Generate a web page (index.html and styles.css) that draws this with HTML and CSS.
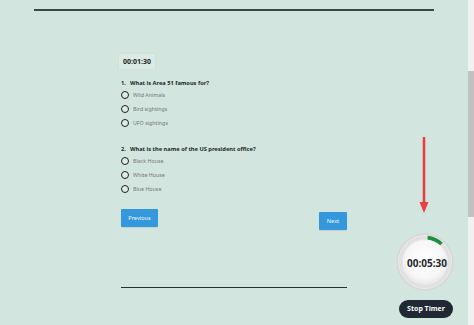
FILE: index.html
```html
<!DOCTYPE html>
<html>
<head>
<meta charset="utf-8">
<link rel="stylesheet" href="styles.css">
</head>
<body>
<div class="page">
  <div class="rule-top"></div>
  <div class="quiz">
    <div class="timer-box">00:01:30</div>

    <div class="question q1"><span class="num">1.</span>What is Area 51 famous for?</div>
    <label class="option"><span class="radio"></span>Wild Animals</label>
    <label class="option"><span class="radio"></span>Bird sightings</label>
    <label class="option"><span class="radio"></span>UFO sightings</label>

    <div class="question q2"><span class="num">2.</span>What is the name of the US president office?</div>
    <label class="option"><span class="radio"></span>Black House</label>
    <label class="option"><span class="radio"></span>White House</label>
    <label class="option"><span class="radio"></span>Blue House</label>

    <div class="nav">
      <button class="btn">Previous</button>
      <button class="btn next">Next</button>
    </div>
    <div class="rule-bottom"></div>
  </div>

  <svg class="arrow" width="10" height="78" viewBox="0 0 10 78">
    <line x1="5" y1="1" x2="5" y2="68" stroke="#e8403f" stroke-width="2.6" stroke-linecap="round"/>
    <polygon points="0.5,65 9.5,65 5,76" fill="#e8403f"/>
  </svg>

  <div class="widget">
    <div class="dial">
      <svg class="dial-bg" width="58" height="58" viewBox="0 0 58 58">
        <defs>
          <radialGradient id="g" cx="50%" cy="45%" r="55%">
            <stop offset="0%" stop-color="#ffffff"/>
            <stop offset="75%" stop-color="#f7f7f7"/>
            <stop offset="100%" stop-color="#e9e9e9"/>
          </radialGradient>
        </defs>
        <circle cx="29" cy="29" r="28.5" fill="#d6d6d6"/>
        <circle cx="29" cy="29" r="27" fill="#ececec"/>
        <circle cx="29" cy="29" r="24.5" fill="none" stroke="#e1e1e1" stroke-width="3.5"/>
        <path d="M31.6 4.6 A24.5 24.5 0 0 1 45.5 11" fill="none" stroke="#1f8f3f" stroke-width="3.6"/>
        <circle cx="29" cy="29" r="22.3" fill="url(#g)"/>
      </svg>
      <span class="dial-time">00:05:30</span>
    </div>
    <button class="stop">Stop Timer</button>
  </div>
</div>
<div class="scrollbar"><div class="thumb"></div></div>
</body>
</html>
```
FILE: styles.css
```css
html, body {
  margin: 0;
  padding: 0;
}
body {
  display: flex;
  width: 474px;
  height: 325px;
  overflow: hidden;
  font-family: "Noto Sans", "Open Sans", sans-serif;
  background: #d3e5df;
}
.page {
  position: relative;
  flex: 1;
  height: 325px;
  background: #d3e5df;
}
.rule-top {
  margin: 9px 34px 0;
  height: 2px;
  background: #344a43;
}
.quiz {
  margin-left: 121px;
  width: 226px;
  display: flex;
  flex-direction: column;
}
.timer-box {
  align-self: flex-start;
  margin-top: 43px;
  margin-left: -2px;
  width: 36px;
  height: 15px;
  display: flex;
  align-items: center;
  justify-content: center;
  background: #dbeae5;
  box-shadow: 0 0 2px rgba(0,0,0,0.06);
  font-size: 7px;
  font-weight: 700;
  color: #1d2725;
}
.question {
  height: 10px;
  line-height: 10px;
  font-size: 5.7px;
  font-weight: 700;
  color: #1c2826;
  white-space: nowrap;
}
.question .num {
  display: inline-block;
  width: 9px;
}
.q1 { margin-top: 8.5px; }
.q2 { margin-top: 14.5px; }
.option {
  height: 14px;
  display: flex;
  align-items: center;
  gap: 4px;
  font-size: 5.3px;
  color: #6f7775;
}
.radio {
  width: 8px;
  height: 8px;
  box-sizing: border-box;
  border: 1.3px solid #1c1f1f;
  border-radius: 50%;
  background: #dfece8;
}
.nav {
  display: flex;
  justify-content: space-between;
  align-items: flex-start;
  margin-top: 13px;
}
.btn {
  border: none;
  margin: 0;
  padding: 0;
  height: 17.5px;
  width: 37px;
  background: #3597dc;
  color: #f4f9fd;
  font-family: inherit;
  font-size: 5.6px;
  border-radius: 1px;
  box-shadow: 0 1px 1px rgba(0,0,0,0.08);
}
.btn.next {
  width: 28px;
  margin-top: 3px;
}
.rule-bottom {
  margin-top: 57px;
  height: 1.6px;
  background: #26332f;
}
.arrow {
  position: absolute;
  left: 419px;
  top: 137px;
}
.widget {
  position: absolute;
  left: 396px;
  top: 233px;
  width: 58px;
  display: flex;
  flex-direction: column;
  align-items: center;
  gap: 9px;
}
.dial {
  position: relative;
  width: 58px;
  height: 58px;
  display: flex;
  align-items: center;
  justify-content: center;
}
.dial-bg {
  position: absolute;
  left: 0;
  top: 0;
}
.dial-time {
  position: relative;
  left: 2px;
  top: 1px;
  font-size: 10px;
  font-weight: 700;
  color: #23282b;
}
.stop {
  border: none;
  margin: 0 0 0 2px;
  padding: 0;
  width: 54px;
  height: 17.5px;
  border-radius: 9px;
  background: #1f2833;
  color: #ffffff;
  font-family: inherit;
  font-size: 7px;
  font-weight: 700;
}
.scrollbar {
  width: 6px;
  height: 325px;
  background: #f1f1f1;
}
.thumb {
  margin-top: 71px;
  height: 146px;
  background: #c1c1c1;
}
```
